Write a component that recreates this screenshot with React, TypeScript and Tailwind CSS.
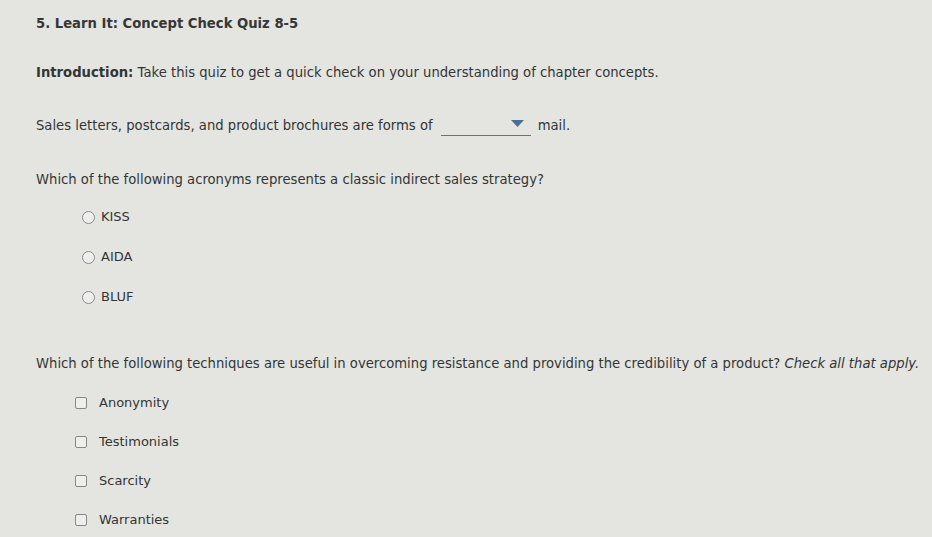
const radios = ["KISS", "AIDA", "BLUF"];
const checks = ["Anonymity", "Testimonials", "Scarcity", "Warranties"];

export default function App() {
  return (
    <div
      className="h-[537px] w-[932px] overflow-hidden bg-[#e4e5e1] text-[13.2px] leading-5 text-[#333535]"
      style={{ fontFamily: '"DejaVu Sans", Verdana, sans-serif' }}
    >
      <div className="flex flex-col pl-[36px] pt-[14px]">
        <h1 className="text-[13.2px] font-bold text-[#353737]">5. Learn It: Concept Check Quiz 8-5</h1>

        <p className="mt-[29px]">
          <span className="font-bold">Introduction:</span> Take this quiz to get a quick check on your
          understanding of chapter concepts.
        </p>

        <div className="mt-[33px] flex items-center">
          <span>Sales letters, postcards, and product brochures are forms of</span>
          <span className="relative ml-[8px] mr-[7px] inline-block h-5 w-[90px] border-b border-[#5a7690]">
            <svg className="absolute right-[7px] top-[4px]" width="13" height="7" viewBox="0 0 13 7">
              <path d="M0 0 L13 0 L6.5 7 Z" fill="#4a6f93" />
            </svg>
          </span>
          <span>mail.</span>
        </div>

        <p className="mt-[34px]">Which of the following acronyms represents a classic indirect sales strategy?</p>

        <div className="mt-[17px] flex flex-col gap-5 pl-[46px]">
          {radios.map((r) => (
            <label key={r} className="flex h-5 items-center gap-[6px]">
              <span className="h-[13px] w-[13px] rounded-full border-[1.5px] border-[#8a8c8a] bg-[#eeefec]" />
              <span className="text-[13px]">{r}</span>
            </label>
          ))}
        </div>

        <p className="mt-[47px]">
          Which of the following techniques are useful in overcoming resistance and providing the credibility of a
          product? <span className="italic">Check all that apply.</span>
        </p>

        <div className="mt-[19px] flex flex-col gap-[19px] pl-[39px]">
          {checks.map((c) => (
            <label key={c} className="flex h-5 items-center gap-[12px]">
              <span className="h-[12px] w-[12px] rounded-[2px] border-[1.5px] border-[#858785] bg-[#eeefec]" />
              <span className="text-[13px]">{c}</span>
            </label>
          ))}
        </div>
      </div>
    </div>
  );
}
